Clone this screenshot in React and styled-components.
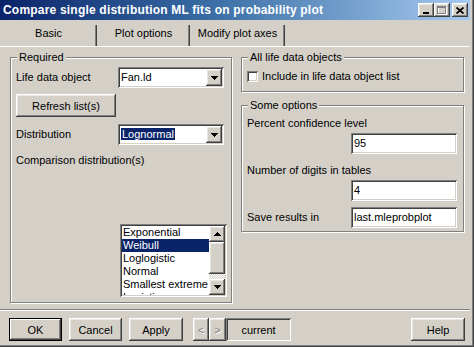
import React from 'react';
import styled, { createGlobalStyle, css } from 'styled-components';

const Global = createGlobalStyle`
  html, body { margin: 0; padding: 0; background: #d4d0c8; }
  body { font-family: "Liberation Sans", Arial, sans-serif; font-size: 11px; color: #000; }
  * { box-sizing: border-box; }
`;

const raised = css`
  box-shadow: inset -1px -1px #404040, inset 1px 1px #ffffff, inset -2px -2px #808080, inset 2px 2px #e8e6e1;
`;
const sunken = css`
  box-shadow: inset 1px 1px #808080, inset -1px -1px #ffffff, inset 2px 2px #404040, inset -2px -2px #d4d0c8;
`;

const Window = styled.div`
  width: 474px;
  height: 347px;
  display: flex;
  flex-direction: column;
  background: #d4d0c8;
  padding: 0 4px 4px 0;
  box-shadow: inset -1px -1px #404040, inset -2px -2px #808080;
  overflow: hidden;
`;

const TitleBar = styled.div`
  height: 20px;
  display: flex;
  align-items: center;
  padding: 0 2px 0 3px;
  background: linear-gradient(to right, #0a246a 0%, #3a6ea5 45%, #a6caf0 100%);
`;

const TitleText = styled.div`
  flex: 1;
  color: #fff;
  font-weight: bold;
  font-size: 12px;
  letter-spacing: 0.2px;
  white-space: nowrap;
  line-height: 14px;
`;

const CaptionButtons = styled.div`
  display: flex;
  align-items: center;
`;

const CaptionButton = styled.div`
  width: 16px;
  height: 14px;
  background: #d4d0c8;
  ${raised};
  display: flex;
  align-items: center;
  justify-content: center;
  margin-left: ${p => (p.$gap ? '2px' : '0')};
`;

const TabStrip = styled.div`
  height: 26px;
  display: flex;
  align-items: flex-end;
`;

const Tab = styled.div`
  width: ${p => p.$w}px;
  height: 21px;
  padding-top: 2px;
  text-align: center;
  line-height: 13px;
  box-shadow: inset -1px 0 #404040, inset -2px 0 #808080;
`;

const Panel = styled.div`
  flex: 1;
  display: flex;
  gap: 9px;
  padding: 10px 0 0 10px;
  border-top: 1px solid #ffffff;
  border-bottom: 1px solid #808080;
`;

const Column = styled.div`
  display: flex;
  flex-direction: column;
  gap: 13px;
  width: ${p => p.$w}px;
`;

const GroupBox = styled.div`
  display: flex;
  flex-direction: column;
  width: ${p => p.$w}px;
  height: ${p => p.$h}px;
  border: 1px solid #808080;
  box-shadow: inset 1px 1px #ffffff, 1px 1px #ffffff;
`;

const Legend = styled.div`
  align-self: flex-start;
  margin: -7px 0 0 6px;
  padding: 0 2px;
  background: #d4d0c8;
  line-height: 13px;
`;

const FieldRow = styled.div`
  display: flex;
  align-items: center;
  margin-top: ${p => p.$mt}px;
  padding-left: 5px;
`;

const FieldLabel = styled.div`
  width: ${p => p.$w}px;
  line-height: 13px;
`;

const Label = styled.div`
  margin-top: ${p => p.$mt}px;
  padding-left: 5px;
  line-height: 13px;
`;

const Combo = styled.div`
  width: 106px;
  height: 21px;
  background: #fff;
  ${sunken};
  display: flex;
  align-items: center;
  padding: 2px;
`;

const ComboText = styled.div`
  flex: 1;
  padding-left: 1px;
  line-height: 13px;
`;

const Selected = styled.span`
  background: #0a246a;
  color: #fff;
  padding: 0 1px;
`;

const ComboArrow = styled.div`
  width: 16px;
  height: 17px;
  background: #d4d0c8;
  ${raised};
  display: flex;
  align-items: center;
  justify-content: center;
`;

const PushButton = styled.div`
  width: ${p => p.$w}px;
  height: 23px;
  background: #d4d0c8;
  ${raised};
  display: flex;
  align-items: center;
  justify-content: center;
  margin: ${p => p.$m || '0'};
  color: ${p => (p.$disabled ? '#808080' : '#000')};
  text-shadow: ${p => (p.$disabled ? '1px 1px #fff' : 'none')};
  ${p =>
    p.$default &&
    css`
      box-shadow: inset 0 0 0 1px #000, inset -2px -2px #404040, inset 2px 2px #ffffff, inset -3px -3px #808080;
    `}
`;

const ListBox = styled.div`
  margin: auto 0 5px 109px;
  width: 107px;
  height: 73px;
  background: #fff;
  ${sunken};
  padding: 2px;
  display: flex;
  overflow: hidden;
`;

const ListItems = styled.div`
  flex: 1;
  display: flex;
  flex-direction: column;
  overflow: hidden;
`;

const ListItem = styled.div`
  height: 13px;
  line-height: 13px;
  padding-left: 1px;
  white-space: nowrap;
  flex-shrink: 0;
  background: ${p => (p.$sel ? '#0a246a' : 'transparent')};
  color: ${p => (p.$sel ? '#fff' : '#000')};
`;

const ScrollBar = styled.div`
  width: 16px;
  display: flex;
  flex-direction: column;
`;

const ScrollArrow = styled.div`
  width: 16px;
  height: 16px;
  flex-shrink: 0;
  background: #d4d0c8;
  ${raised};
  display: flex;
  align-items: center;
  justify-content: center;
`;

const ScrollThumb = styled.div`
  height: 32px;
  flex-shrink: 0;
  background: #d4d0c8;
  ${raised};
`;

const ScrollTrack = styled.div`
  flex: 1;
  background: repeating-conic-gradient(#ffffff 0 25%, #d4d0c8 0 50%) 0 0 / 2px 2px;
`;

const CheckRow = styled.div`
  display: flex;
  align-items: center;
  gap: 4px;
  margin-top: 6px;
  padding-left: 5px;
  line-height: 13px;
`;

const CheckBox = styled.div`
  width: 11px;
  height: 11px;
  background: #fff;
  box-shadow: inset 1px 1px #808080, inset -1px -1px #ffffff, inset 2px 2px #404040, inset -2px -2px #d4d0c8;
`;

const TextInput = styled.div`
  width: 106px;
  height: 21px;
  margin: ${p => p.$m || '0'};
  background: #fff;
  ${sunken};
  padding: 0 3px;
  display: flex;
  align-items: center;
  line-height: 13px;
`;

const Footer = styled.div`
  height: 33px;
  display: flex;
  align-items: flex-start;
  padding: 7px 5px 0 9px;
  border-top: 1px solid #ffffff;
`;

const ButtonGroup = styled.div`
  display: flex;
  gap: ${p => p.$gap}px;
  margin-left: ${p => p.$ml || 0}px;
`;

const StatusField = styled.div`
  width: 65px;
  height: 23px;
  ${sunken};
  display: flex;
  align-items: center;
  justify-content: center;
`;

const Spacer = styled.div`
  flex: 1;
`;

const DownArrow = () => (
  <svg width="7" height="4" viewBox="0 0 7 4" shapeRendering="crispEdges">
    <path d="M0 0h7v1h-1v1h-1v1h-1v1h-1v-1h-1v-1h-1v-1h-1z" fill="#000" />
  </svg>
);
const UpArrow = () => (
  <svg width="7" height="4" viewBox="0 0 7 4" shapeRendering="crispEdges">
    <path d="M3 0h1v1h1v1h1v1h1v1h-7v-1h1v-1h1v-1h1z" fill="#000" />
  </svg>
);

export default function App() {
  return (
    <>
      <Global />
      <Window>
        <TitleBar>
          <TitleText>Compare single distribution ML fits on probability plot</TitleText>
          <CaptionButtons>
            <CaptionButton>
              <svg width="8" height="8" viewBox="0 0 8 8" shapeRendering="crispEdges">
                <rect x="1" y="6" width="6" height="2" fill="#000" />
              </svg>
            </CaptionButton>
            <CaptionButton>
              <svg width="10" height="9" viewBox="0 0 10 9" shapeRendering="crispEdges">
                <rect x="1.5" y="1.5" width="8" height="7" fill="none" stroke="#fff" />
                <rect x="0.5" y="0.5" width="8" height="7" fill="none" stroke="#808080" />
                <rect x="0" y="1" width="9" height="1" fill="#808080" />
              </svg>
            </CaptionButton>
            <CaptionButton $gap>
              <svg width="8" height="7" viewBox="0 0 8 7">
                <path d="M0.5 0.5L7.5 6.5M7.5 0.5L0.5 6.5" stroke="#000" strokeWidth="1.8" />
              </svg>
            </CaptionButton>
          </CaptionButtons>
        </TitleBar>

        <TabStrip>
          <Tab $w={97}>Basic</Tab>
          <Tab $w={93}>Plot options</Tab>
          <Tab $w={95}>Modify plot axes</Tab>
        </TabStrip>

        <Panel>
          <Column $w={222}>
            <GroupBox $w={222} $h={246}>
              <Legend>Required</Legend>
              <FieldRow $mt={3}>
                <FieldLabel $w={102}>Life data object</FieldLabel>
                <Combo>
                  <ComboText>Fan.ld</ComboText>
                  <ComboArrow><DownArrow /></ComboArrow>
                </Combo>
              </FieldRow>
              <PushButton $w={100} $m="6px 0 0 5px">Refresh list(s)</PushButton>
              <FieldRow $mt={7}>
                <FieldLabel $w={102}>Distribution</FieldLabel>
                <Combo>
                  <ComboText><Selected>Lognormal</Selected></ComboText>
                  <ComboArrow><DownArrow /></ComboArrow>
                </Combo>
              </FieldRow>
              <Label $mt={9}>Comparison distribution(s)</Label>
              <ListBox>
                <ListItems>
                  <ListItem>Exponential</ListItem>
                  <ListItem $sel>Weibull</ListItem>
                  <ListItem>Loglogistic</ListItem>
                  <ListItem>Normal</ListItem>
                  <ListItem>Smallest extreme</ListItem>
                  <ListItem>Logistic</ListItem>
                </ListItems>
                <ScrollBar>
                  <ScrollArrow><UpArrow /></ScrollArrow>
                  <ScrollThumb />
                  <ScrollTrack />
                  <ScrollArrow><DownArrow /></ScrollArrow>
                </ScrollBar>
              </ListBox>
            </GroupBox>
          </Column>

          <Column $w={223}>
            <GroupBox $w={223} $h={35}>
              <Legend>All life data objects</Legend>
              <CheckRow>
                <CheckBox />
                <span>Include in life data object list</span>
              </CheckRow>
            </GroupBox>
            <GroupBox $w={223} $h={127}>
              <Legend>Some options</Legend>
              <Label $mt={5}>Percent confidence level</Label>
              <TextInput $m="3px 0 0 109px">95</TextInput>
              <Label $mt={10}>Number of digits in tables</Label>
              <TextInput $m="3px 0 0 109px">4</TextInput>
              <FieldRow $mt={6}>
                <FieldLabel $w={104}>Save results in</FieldLabel>
                <TextInput>last.mleprobplot</TextInput>
              </FieldRow>
            </GroupBox>
          </Column>
        </Panel>

        <Footer>
          <ButtonGroup $gap={7}>
            <PushButton $w={53} $default>OK</PushButton>
            <PushButton $w={53}>Cancel</PushButton>
            <PushButton $w={54}>Apply</PushButton>
          </ButtonGroup>
          <ButtonGroup $gap={0} $ml={10}>
            <PushButton $w={16} $disabled>&lt;</PushButton>
            <PushButton $w={17} $disabled>&gt;</PushButton>
            <StatusField>current</StatusField>
          </ButtonGroup>
          <Spacer />
          <PushButton $w={54}>Help</PushButton>
        </Footer>
      </Window>
    </>
  );
}
